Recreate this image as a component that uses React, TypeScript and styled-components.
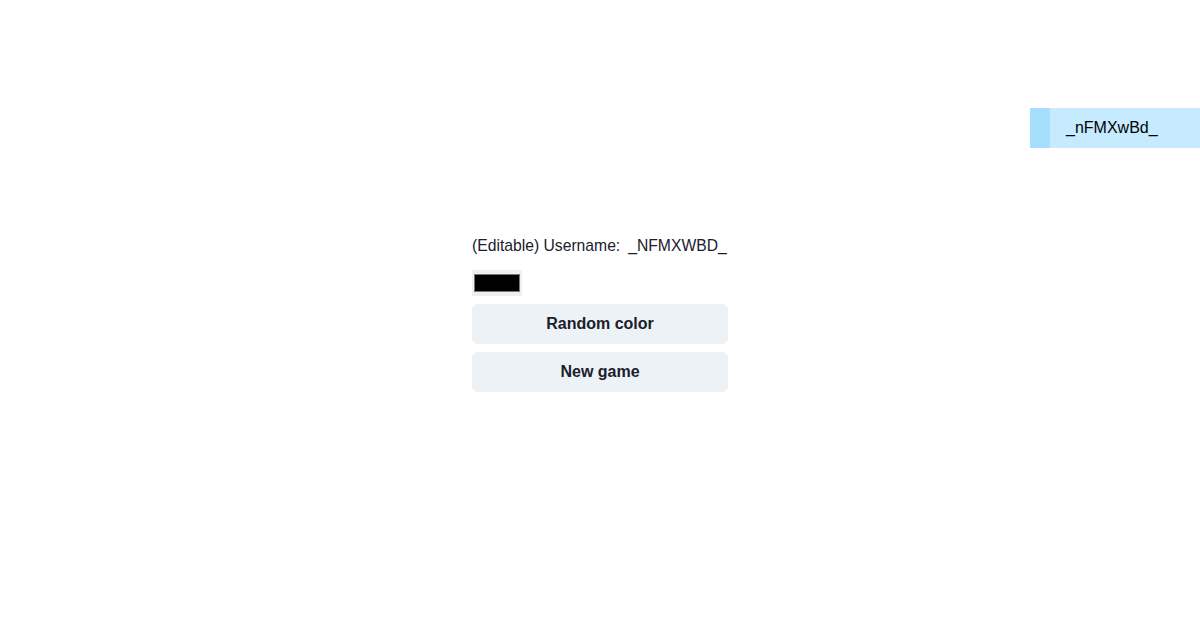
import React from "react";
import styled, { createGlobalStyle } from "styled-components";

const Global = createGlobalStyle`
  html, body { margin: 0; padding: 0; background: #ffffff; }
  body { font-family: "Liberation Sans", Arial, sans-serif; color: #1a202c; }
`;

const Page = styled.div`
  position: relative;
  width: 1200px;
  height: 630px;
  display: flex;
  align-items: center;
  justify-content: center;
`;

const Column = styled.div`
  width: 256px;
  display: flex;
  flex-direction: column;
  gap: 8px;
  margin-top: 0;
`;

const UserLine = styled.div`
  display: flex;
  align-items: center;
  gap: 8px;
  font-size: 15.7px;
  line-height: 24px;
  margin-top: -5px;
  margin-bottom: 4px;
  white-space: nowrap;
`;

const Editable = styled.span`
  text-transform: uppercase;
`;

const ColorInput = styled.input`
  width: 50px;
  height: 26px;
  margin: 0;
  border: none;
  background: #efefef;
  padding: 0;
`;

const Button = styled.button`
  height: 40px;
  width: 100%;
  border: none;
  border-radius: 6px;
  background: #edf2f7;
  color: #1a202c;
  font-family: "Liberation Sans", Arial, sans-serif;
  font-weight: 700;
  font-size: 16px;
  cursor: pointer;
`;

const Players = styled.div`
  position: absolute;
  top: 108px;
  right: 0;
  width: 170px;
  height: 40px;
  display: flex;
  background: #c6ebfe;
`;

const Stripe = styled.div`
  width: 20px;
  background: #a6dffe;
`;

const PlayerName = styled.div`
  padding-left: 16px;
  display: flex;
  align-items: center;
  font-size: 16px;
  color: #000000;
`;

export default function App() {
  return (
    <>
      <Global />
      <Page>
        <Column>
          <UserLine>
            <span>(Editable) Username:</span>
            <Editable>_nFMXwBd_</Editable>
          </UserLine>
          <ColorInput type="color" defaultValue="#000000" />
          <Button>Random color</Button>
          <Button>New game</Button>
        </Column>
        <Players>
          <Stripe />
          <PlayerName>_nFMXwBd_</PlayerName>
        </Players>
      </Page>
    </>
  );
}
